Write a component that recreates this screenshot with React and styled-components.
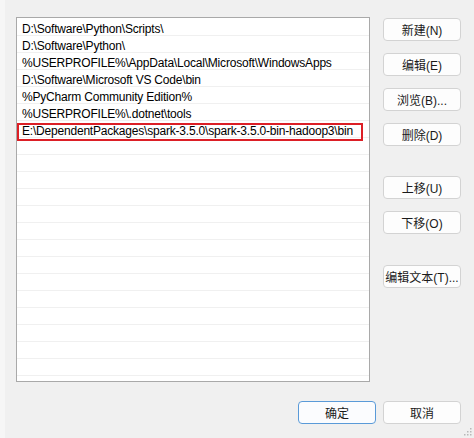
import React from "react";
import styled, { createGlobalStyle } from "styled-components";

const GlobalStyle = createGlobalStyle`
  html, body {
    margin: 0;
    padding: 0;
    background: #f0f0f0;
  }
  body {
    font-family: "Liberation Sans", "Noto Sans CJK SC", sans-serif;
    font-size: 12px;
    color: #000;
  }
`;

const Window = styled.div`
  position: relative;
  width: 474px;
  height: 438px;
  box-sizing: border-box;
  background: #f0f0f0;
  border-left: 5px solid #f6f6f6;
  display: flex;
  flex-direction: column;
  padding: 17px 13px 0 11px;
`;

const Body = styled.div`
  display: flex;
  gap: 13px;
`;

const List = styled.div`
  position: relative;
  width: 354px;
  height: 365px;
  box-sizing: border-box;
  background: #fff;
  border: 1px solid #a9a9a9;
  padding-top: 3px;
  overflow: hidden;
  background-image: repeating-linear-gradient(
    to bottom,
    transparent 0,
    transparent 16px,
    #f0f0f0 16px,
    #f0f0f0 17px
  );
  background-position: 0 1px;
`;

const Row = styled.div`
  height: 17px;
  line-height: 17px;
  padding-left: 5px;
  white-space: nowrap;
  font-family: "Liberation Sans", "Noto Sans CJK SC", sans-serif;
  font-size: 12px;
  letter-spacing: -0.2px;
`;

const Marker = styled.div`
  position: absolute;
  left: 0;
  top: ${(p) => p.$top}px;
  width: 346px;
  height: 18px;
  box-sizing: border-box;
  border: 2px solid #dc1f26;
  pointer-events: none;
`;

const Side = styled.div`
  display: flex;
  flex-direction: column;
  padding-top: 1px;
`;

const Group = styled.div`
  display: flex;
  flex-direction: column;
  gap: 12px;
  margin-bottom: ${(p) => p.$after}px;
`;

const Button = styled.button`
  width: 78px;
  height: 23px;
  box-sizing: border-box;
  padding: 0;
  background: ${(p) => (p.$primary ? "#fbfcfe" : "#fdfdfd")};
  border: 1px solid ${(p) => (p.$primary ? "#5a9ad8" : "#d3d3d3")};
  border-radius: 4px;
  font-family: "Liberation Sans", "Noto Sans CJK SC", sans-serif;
  font-size: 12px;
  color: #1a1a1a;
  cursor: pointer;
`;

const Footer = styled.div`
  display: flex;
  justify-content: flex-end;
  gap: 7px;
  margin-top: 19px;
`;

const Grip = styled.svg`
  position: absolute;
  right: 2px;
  bottom: 2px;
`;

const paths = [
  "D:\\Software\\Python\\Scripts\\",
  "D:\\Software\\Python\\",
  "%USERPROFILE%\\AppData\\Local\\Microsoft\\WindowsApps",
  "D:\\Software\\Microsoft VS Code\\bin",
  "%PyCharm Community Edition%",
  "%USERPROFILE%\\.dotnet\\tools",
  "E:\\DependentPackages\\spark-3.5.0\\spark-3.5.0-bin-hadoop3\\bin",
];

export default function App() {
  return (
    <>
      <GlobalStyle />
      <Window>
        <Body>
          <List>
            {paths.map((p) => (
              <Row key={p}>{p}</Row>
            ))}
            <Marker $top={105} />
          </List>
          <Side>
            <Group $after={30}>
              <Button>新建(N)</Button>
              <Button>编辑(E)</Button>
              <Button>浏览(B)...</Button>
              <Button>删除(D)</Button>
            </Group>
            <Group $after={31}>
              <Button>上移(U)</Button>
              <Button>下移(O)</Button>
            </Group>
            <Group $after={0}>
              <Button>编辑文本(T)...</Button>
            </Group>
          </Side>
        </Body>
        <Footer>
          <Button $primary>确定</Button>
          <Button>取消</Button>
        </Footer>
        <Grip width="8" height="8" viewBox="0 0 8 8">
          <g fill="#b8b8b8">
            <rect x="6" y="0" width="1.5" height="1.5" />
            <rect x="3" y="3" width="1.5" height="1.5" />
            <rect x="6" y="3" width="1.5" height="1.5" />
            <rect x="0" y="6" width="1.5" height="1.5" />
            <rect x="3" y="6" width="1.5" height="1.5" />
            <rect x="6" y="6" width="1.5" height="1.5" />
          </g>
        </Grip>
      </Window>
    </>
  );
}
